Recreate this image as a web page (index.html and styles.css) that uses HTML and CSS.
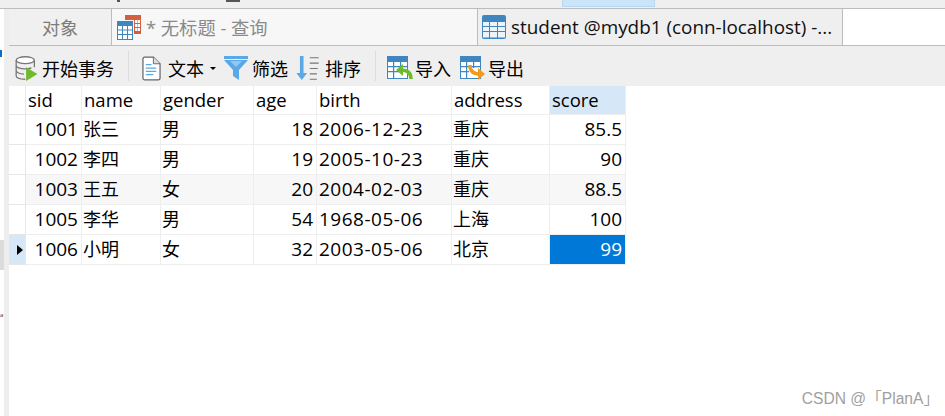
FILE: index.html
```html
<!DOCTYPE html>
<html lang="zh">
<head>
<meta charset="utf-8">
<title>student @mydb1</title>
<link rel="stylesheet" href="styles.css">
</head>
<body>
<div class="app">
  <aside class="gutter">
    <div class="gutter-edge">
      <span class="edge-blue"></span>
      <span class="edge-thumb"></span>
      <span class="edge-char">a</span>
    </div>
    <div class="gutter-bar"></div>
  </aside>
  <main class="main">
    <div class="topstrip">
      <span class="top-mark top-mark-a"></span>
      <span class="top-mark top-mark-b"></span>
      <span class="topstrip-blue"></span>
    </div>
    <nav class="tabs">
      <div class="tab tab-objects">对象</div>
      <div class="tab tab-query">
        <svg class="tab-icon-query" width="26" height="26" viewBox="0 0 26 26">
          <path fill="#d2603f" d="M8 0h16v19H8z"/>
          <path fill="#fff" d="M18 5h2.500v3H18zM21 5h2v3h-2zM18 9h2.500v3H18zM21 9h2v3h-2zM18 13h2.500v3H18zM21 13h2v3h-2z"/>
          <path fill="#f7f7f7" d="M-1 5h18v21H-1z"/>
          <path fill="#3f86c1" d="M0 6h16v19H0z"/>
          <path fill="#fff" d="M1 11h4v3.500H1zM6 11h4v3.500H6zM11 11h4v3.500h-4zM1 15.500h4v3.500H1zM6 15.500h4v3.500H6zM11 15.500h4v3.500h-4zM1 20h4v4H1zM6 20h4v4H6zM11 20h4v4h-4z"/>
        </svg>
        <span class="tab-title-query">* 无标题 - 查询</span>
      </div>
      <div class="tab tab-active">
        <svg width="24" height="24" viewBox="0 0 24 24">
          <rect x="0" y="0" width="24" height="24" rx="2" fill="#3f86c1"/>
          <path fill="#fff" d="M1 7h6v4H1zM8 7h7v4H8zM16 7h7v4h-7zM1 12h6v4H1zM8 12h7v4H8zM16 12h7v4h-7zM1 17h6v5.500H1zM8 17h7v5.500H8zM16 17h7v5.500h-7z" opacity=".9"/>
        </svg>
        <span class="tab-title-active">student @mydb1 (conn-localhost) -...</span>
      </div>
      <div class="tab-blank"></div>
    </nav>
    <div class="toolbar">
      <button class="tool tool-begin">
        <svg width="26" height="26" viewBox="0 0 28 30">
          <g fill="none" stroke="#777" stroke-width="1.500">
            <ellipse cx="12" cy="6" rx="10.500" ry="4" fill="#fff"/>
            <path d="M1.500 6v18c0 2 3.500 4 10.500 4M22.500 6v8M1.500 12c0 2 4 4 10.500 4 3 0 5-.5 7-1M1.500 18c0 2 4 4 9 4"/>
          </g>
          <path fill="#6dbb2c" d="M13 14l13 8-13 8z"/>
        </svg>
        <span>开始事务</span>
      </button>
      <span class="sep"></span>
      <button class="tool tool-text">
        <svg width="19" height="25" viewBox="0 0 20 26">
          <path d="M1 3a2 2 0 0 1 2-2h9l7 7v15a2 2 0 0 1-2 2H3a2 2 0 0 1-2-2z" fill="#fff" stroke="#666" stroke-width="1.300"/>
          <path d="M12 1v7h7" fill="#ddd" stroke="#666" stroke-width="1"/>
          <path d="M4 9h6M4 12.500h11M4 16h11M4 19.500h8" stroke="#5aa9e6" stroke-width="1.300"/>
        </svg>
        <span>文本</span>
        <span class="caret"></span>
      </button>
      <button class="tool tool-filter">
        <svg width="24" height="24" viewBox="0 0 24 24">
          <path fill="#5aa9e6" d="M0 0h24v3H0zM0 4h24L15 14v10l-6-4v-6z"/>
          <path fill="#fff" d="M6 5h12l-6 6z" opacity=".35"/>
        </svg>
        <span>筛选</span>
      </button>
      <button class="tool tool-sort">
        <svg width="24" height="25" viewBox="0 0 26 28">
          <path fill="#5aa9e6" d="M4 0h4v19h4l-6 8-6-8h4z"/>
          <path stroke="#777" stroke-width="1.300" d="M15 2h10M15 8h10M15 14h9M15 20h8M15 26h8"/>
        </svg>
        <span>排序</span>
      </button>
      <span class="sep"></span>
      <button class="tool tool-import">
        <svg width="26" height="24" viewBox="0 0 26 24">
          <rect x="0.500" y="0.500" width="20" height="22" fill="#fff" stroke="#3f86c1"/>
          <path fill="#3f86c1" d="M0 0h21v6H0zM0 10h21v1.200H0zM0 15h12v1.200H0zM6 6h1.200v17H6zM13 6h1.200v6H13z"/>
          <path d="M24 23c0-6-3-9-10-9" fill="none" stroke="#6dbb2c" stroke-width="3.500"/>
          <path fill="#6dbb2c" d="M16 8l-7 6 7 6z"/>
        </svg>
        <span>导入</span>
      </button>
      <button class="tool tool-export">
        <svg width="26" height="24" viewBox="0 0 26 24">
          <rect x="0.500" y="0.500" width="20" height="22" fill="#fff" stroke="#3f86c1"/>
          <path fill="#3f86c1" d="M0 0h21v6H0zM0 10h21v1.200H0zM0 15h9v1.200H0zM6 6h1.200v17H6zM13 6h1.200v6H13z"/>
          <path d="M10 9c0 6 3 9 9 9" fill="none" stroke="#f39a1d" stroke-width="3.500"/>
          <path fill="#f39a1d" d="M18 12l7 6-7 6z"/>
        </svg>
        <span>导出</span>
      </button>
    </div>
    <section class="grid">
      <div class="row row-head">
        <div class="rh"></div>
        <div class="c">sid</div><div class="c">name</div><div class="c">gender</div><div class="c">age</div><div class="c">birth</div><div class="c">address</div><div class="c c-sel-head">score</div>
      </div>
      <div class="row">
        <div class="rh"></div>
        <div class="c num">1001</div><div class="c zh">张三</div><div class="c zh">男</div><div class="c num">18</div><div class="c date">2006-12-23</div><div class="c zh">重庆</div><div class="c num">85.5</div>
      </div>
      <div class="row">
        <div class="rh"></div>
        <div class="c num">1002</div><div class="c zh">李四</div><div class="c zh">男</div><div class="c num">19</div><div class="c date">2005-10-23</div><div class="c zh">重庆</div><div class="c num">90</div>
      </div>
      <div class="row row-alt">
        <div class="rh"></div>
        <div class="c num">1003</div><div class="c zh">王五</div><div class="c zh">女</div><div class="c num">20</div><div class="c date">2004-02-03</div><div class="c zh">重庆</div><div class="c num">88.5</div>
      </div>
      <div class="row">
        <div class="rh"></div>
        <div class="c num">1005</div><div class="c zh">李华</div><div class="c zh">男</div><div class="c num">54</div><div class="c date">1968-05-06</div><div class="c zh">上海</div><div class="c num">100</div>
      </div>
      <div class="row">
        <div class="rh rh-current"><span class="arrow"></span></div>
        <div class="c num">1006</div><div class="c zh">小明</div><div class="c zh">女</div><div class="c num">32</div><div class="c date">2003-05-06</div><div class="c zh">北京</div><div class="c num c-sel">99</div>
      </div>
    </section>
    <footer class="watermark">CSDN @「PlanA」</footer>
  </main>
</div>
</body>
</html>
```
FILE: styles.css
```css
* { box-sizing: border-box; }
html, body { margin: 0; height: 100%; overflow: hidden; background: #fff; }
body { font-family: "Open Sans", "Noto Sans CJK SC", sans-serif; font-size: 18px; color: #000; }

.app { display: flex; width: 945px; height: 416px; }

.gutter { display: flex; width: 9px; flex: none; }
.gutter-edge { position: relative; width: 4px; background: #fff; }
.gutter-bar { width: 5px; background: #eeeeee; }
.edge-blue { position: absolute; left: 0; top: 50px; width: 2px; height: 7px; background: #0a6fc2; }
.edge-thumb { position: absolute; left: 0; top: 240px; width: 4px; height: 30px; background: #dcdcdc; }
.edge-char { position: absolute; left: 0; top: 311px; font-size: 6px; line-height: 8px; color: #333; }

.main { position: relative; flex: 1; display: flex; flex-direction: column; min-width: 0; }

.topstrip { position: relative; height: 9px; background: #efefef; border-bottom: 1px solid #bcbcbc; margin-left: -9px; }
.top-mark { position: absolute; top: 0; height: 2px; background: #555; }
.top-mark-a { left: 117px; width: 3px; }
.top-mark-b { left: 226px; width: 14px; }
.topstrip-blue { position: absolute; left: 562px; top: 0; width: 93px; height: 7px; background: #cce4f7; border: 1px solid #b5d7f5; border-top: 0; }

.tabs { display: flex; height: 37px; border-bottom: 1px solid #bcbcbc; background: #efefef; }
.tab { display: flex; align-items: center; height: 36px; white-space: nowrap; }
.tab-objects { width: 103px; justify-content: center; color: #7c7c7c; background: #f0f0f0; border-right: 1px solid #bcbcbc; }
.tab-query { width: 366px; padding-left: 5px; color: #8a8a8a; background: #f7f7f7; border-right: 1px solid #bcbcbc; }
.tab-icon-query { margin-top: 2px; flex: none; }
.tab-title-query { margin-left: 3px; font-size: 18.300px; }
.tab-active { width: 364px; padding-left: 4px; background: #efefef; }
.tab-active svg { flex: none; }
.tab-title-active { margin-left: 5px; color: #111; font-size: 18.900px; }
.tab-blank { flex: 1; height: 36px; background: #fff; border-left: 1px solid #bcbcbc; }

.toolbar { display: flex; align-items: center; height: 40px; background: #efefef; padding: 4px 0 0 5px; }
.tool { display: flex; align-items: center; padding: 0; border: 0; background: none; font: inherit; color: #000; }
.tool svg { flex: none; }
.tool-begin { gap: 2px; }
.sep { width: 1px; height: 30px; margin-top: -4px; background: #dcdcdc; }
.tool-begin + .sep { margin-left: 14px; margin-right: 13px; }
.tool-text { gap: 7px; }
.caret { width: 0; height: 0; margin-left: -1px; border-left: 3px solid transparent; border-right: 3px solid transparent; border-top: 3px solid #000; }
.tool-filter { gap: 4px; margin-left: 8px; }
.tool-sort { gap: 5px; margin-left: 8px; }
.tool-sort + .sep { margin-left: 14px; margin-right: 11px; }
.tool-import { gap: 2px; }
.tool-export { gap: 2px; margin-left: 9px; }

.grid { display: flex; flex-direction: column; }
.row { display: grid; grid-template-columns: 17px 56px 79px 93px 63px 135px 98px 76px; width: 617px; height: 30px; }
.row-head { height: 29px; }
.row-head .c { padding-bottom: 1px; font-size: 18.500px; }
.row-alt .c { background: #f7f7f7; }
.rh { border-right: 1px solid #e6e6e6; border-bottom: 1px solid #e6e6e6; display: flex; align-items: center; padding-left: 8px; }
.rh-current { background: #d6e8f7; }
.arrow { width: 0; height: 0; border-top: 5px solid transparent; border-bottom: 5px solid transparent; border-left: 6px solid #000; }
.c { display: flex; align-items: center; padding: 0 3px 2px 2px; border-right: 1px solid #eeeeee; border-bottom: 1px solid #eeeeee; overflow: hidden; white-space: nowrap; }
.num { justify-content: flex-end; font-size: 19px; }
.date { font-size: 19px; letter-spacing: .5px; }
.zh { padding-left: 1px; padding-bottom: 4px; }
.c-sel-head { background: #d6e8f7; }
.c-sel { background: #0078d7; color: #fff; }

.watermark { position: absolute; right: 6px; top: 389px; font-family: "Liberation Sans", "Noto Sans CJK SC", sans-serif; font-size: 15.600px; line-height: 20px; color: #a0a0a0; }
```
